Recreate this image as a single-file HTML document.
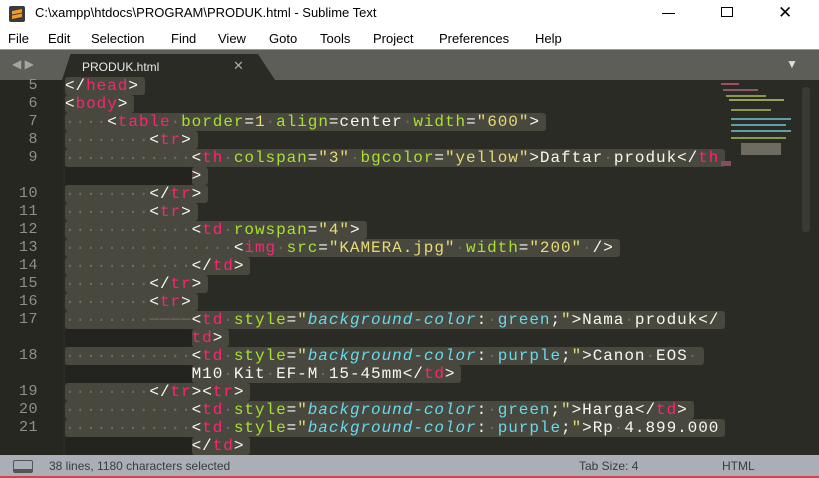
<!DOCTYPE html>
<html><head><meta charset="utf-8"><style>
*{margin:0;padding:0;box-sizing:border-box}
body{width:819px;height:478px;overflow:hidden;background:#2b2b25;font-family:"Liberation Sans",sans-serif;position:relative}
#title{position:absolute;left:0;top:0;width:819px;height:28px;background:#fff}
#title .ic{position:absolute;left:9px;top:6px;width:16px;height:16px;background:#3b3b3b;border-radius:2px}
#title .ic b{position:absolute;left:3px;top:3px;width:10px;height:10px;background:#f29b21;clip-path:polygon(0 20%,100% 0,100% 35%,0 55%,0 100%,100% 80%,100% 45%,0 65%)}
#title .t{position:absolute;left:35px;top:5px;font-size:13px;color:#000}
#menu{position:absolute;left:0;top:28px;width:819px;height:22px;background:#fff;border-bottom:1px solid #9a9a9a}
#menu span{position:absolute;top:3px;font-size:13px;color:#000}
#tabbar{position:absolute;left:0;top:50px;width:819px;height:30px;background:#5e5e59}
#tab{position:absolute;left:62px;top:54px;width:213px;height:26px;background:#2b2b25;clip-path:polygon(4% 0,92% 0,100% 100%,0 100%)}
#editor{position:absolute;left:0;top:80px;width:819px;height:375px;background:#2b2b25}
#gut{position:absolute;left:0;top:80px;width:63px;height:375px;background:#272722}
.row{position:absolute;left:0;height:18px;width:720px;font-family:"Liberation Mono",monospace;font-size:16px;letter-spacing:0.95px;line-height:18px;white-space:pre}
.num{position:absolute;left:0;width:38px;text-align:right;color:#8f908a;font-size:15px;letter-spacing:0.5px}
.code{position:absolute;left:65px;top:0;color:#f8f8f2;height:18px}
.sel{background:#49483e;border-radius:3px;padding-right:6px;display:inline-block;height:18px}
.wr{background:#23231f;border-radius:3px;display:inline-block;height:18px}
.d{color:#6e6d62}.t{color:#f92672}.a{color:#a6e22e}.s{color:#e6db74}.c{color:#66d9ef;font-style:italic}.v{color:#66d9ef}
#status{position:absolute;left:0;top:455px;width:819px;height:23px;background:#a9aeb7;border-bottom:2px solid #d2444a;font-size:12px;color:#3c3c3c}
</style></head><body>
<div id="title"><div class="ic"><b></b></div><div class="t">C:\xampp\htdocs\PROGRAM\PRODUK.html - Sublime Text</div>
<div style="position:absolute;left:662px;top:13px;width:13px;height:1px;background:#000"></div>
<div style="position:absolute;left:721px;top:7px;width:12px;height:10px;border:1px solid #000"></div>
<div style="position:absolute;left:778px;top:3px;font-size:17px;color:#000">✕</div></div>
<div id="menu"><span style="left:8px">File</span><span style="left:48px">Edit</span><span style="left:91px">Selection</span><span style="left:171px">Find</span><span style="left:218px">View</span><span style="left:269px">Goto</span><span style="left:320px">Tools</span><span style="left:373px">Project</span><span style="left:439px">Preferences</span><span style="left:535px">Help</span></div>
<div id="tabbar"><span style="position:absolute;left:12px;top:7px;color:#a5a5a0;font-size:12px">◀ ▶</span>
<span style="position:absolute;left:786px;top:7px;color:#ddd;font-size:12px">▼</span></div>
<div id="tab"><span style="position:absolute;left:20px;top:6px;font-size:12px;color:#e8e8e8">PRODUK.html</span><span style="position:absolute;left:171px;top:4px;font-size:13px;color:#aaa">✕</span></div>
<div id="editor"></div><div id="gut"></div>

<div class="row" style="top:77px"><span class="num">5</span><span class="code sel">&lt;/<span class="t">head</span>&gt;</span></div>
<div class="row" style="top:95px"><span class="num">6</span><span class="code sel">&lt;<span class="t">body</span>&gt;</span></div>
<div class="row" style="top:113px"><span class="num">7</span><span class="code sel"><span class="d">····</span>&lt;<span class="t">table</span><span class="d">·</span><span class="a">border</span>=<span class="s">1</span><span class="d">·</span><span class="a">align</span>=center<span class="d">·</span><span class="a">width</span>=<span class="s">"600"</span>&gt;</span></div>
<div class="row" style="top:131px"><span class="num">8</span><span class="code sel"><span class="d">········</span>&lt;<span class="t">tr</span>&gt;</span></div>
<div class="row" style="top:149px"><span class="num">9</span><span class="code sel"><span class="d">············</span>&lt;<span class="t">th</span><span class="d">·</span><span class="a">colspan</span>=<span class="s">"3"</span><span class="d">·</span><span class="a">bgcolor</span>=<span class="s">"yellow"</span>&gt;Daftar<span class="d">·</span>produk&lt;/<span class="t">th</span></span></div>
<div class="row" style="top:167px"><span class="code"><span class="wr">            </span><span class="sel">&gt;</span></span></div>
<div class="row" style="top:185px"><span class="num">10</span><span class="code sel"><span class="d">········</span>&lt;/<span class="t">tr</span>&gt;</span></div>
<div class="row" style="top:203px"><span class="num">11</span><span class="code sel"><span class="d">········</span>&lt;<span class="t">tr</span>&gt;</span></div>
<div class="row" style="top:221px"><span class="num">12</span><span class="code sel"><span class="d">············</span>&lt;<span class="t">td</span><span class="d">·</span><span class="a">rowspan</span>=<span class="s">"4"</span>&gt;</span></div>
<div class="row" style="top:239px"><span class="num">13</span><span class="code sel"><span class="d">················</span>&lt;<span class="t">img</span><span class="d">·</span><span class="a">src</span>=<span class="s">"KAMERA.jpg"</span><span class="d">·</span><span class="a">width</span>=<span class="s">"200"</span><span class="d">·</span>/&gt;</span></div>
<div class="row" style="top:257px"><span class="num">14</span><span class="code sel"><span class="d">············</span>&lt;/<span class="t">td</span>&gt;</span></div>
<div class="row" style="top:275px"><span class="num">15</span><span class="code sel"><span class="d">········</span>&lt;/<span class="t">tr</span>&gt;</span></div>
<div class="row" style="top:293px"><span class="num">16</span><span class="code sel"><span class="d">········</span>&lt;<span class="t">tr</span>&gt;</span></div>
<div class="row" style="top:311px"><span class="num">17</span><span class="code sel"><span class="d">········────</span>&lt;<span class="t">td</span><span class="d">·</span><span class="a">style</span>=<span class="s">"</span><span class="c">background-color</span>:<span class="d">·</span><span class="v">green</span>;<span class="s">"</span>&gt;Nama<span class="d">·</span>produk&lt;/</span></div>
<div class="row" style="top:329px"><span class="code"><span class="wr">            </span><span class="sel"><span class="t">td</span>&gt;</span></span></div>
<div class="row" style="top:347px"><span class="num">18</span><span class="code sel"><span class="d">············</span>&lt;<span class="t">td</span><span class="d">·</span><span class="a">style</span>=<span class="s">"</span><span class="c">background-color</span>:<span class="d">·</span><span class="v">purple</span>;<span class="s">"</span>&gt;Canon<span class="d">·</span>EOS<span class="d">·</span></span></div>
<div class="row" style="top:365px"><span class="code"><span class="wr">            </span><span class="sel">M10<span class="d">·</span>Kit<span class="d">·</span>EF-M<span class="d">·</span>15-45mm&lt;/<span class="t">td</span>&gt;</span></span></div>
<div class="row" style="top:383px"><span class="num">19</span><span class="code sel"><span class="d">········</span>&lt;/<span class="t">tr</span>&gt;&lt;<span class="t">tr</span>&gt;</span></div>
<div class="row" style="top:401px"><span class="num">20</span><span class="code sel"><span class="d">············</span>&lt;<span class="t">td</span><span class="d">·</span><span class="a">style</span>=<span class="s">"</span><span class="c">background-color</span>:<span class="d">·</span><span class="v">green</span>;<span class="s">"</span>&gt;Harga&lt;/<span class="t">td</span>&gt;</span></div>
<div class="row" style="top:419px"><span class="num">21</span><span class="code sel"><span class="d">············</span>&lt;<span class="t">td</span><span class="d">·</span><span class="a">style</span>=<span class="s">"</span><span class="c">background-color</span>:<span class="d">·</span><span class="v">purple</span>;<span class="s">"</span>&gt;Rp<span class="d">·</span>4.899.000</span></div>
<div class="row" style="top:437px"><span class="code"><span class="wr">            </span><span class="sel">&lt;/<span class="t">td</span>&gt;</span></span></div>

<div style="position:absolute;left:721px;top:83px;width:75px;height:85px">
<div style="position:absolute;left:0;top:0;width:18px;height:2px;background:#a04c6a"></div>
<div style="position:absolute;left:2px;top:6px;width:35px;height:2px;background:#8a5a6a"></div>
<div style="position:absolute;left:5px;top:12px;width:40px;height:2px;background:#8a9a4a"></div>
<div style="position:absolute;left:8px;top:16px;width:55px;height:2px;background:#9aa060"></div>
<div style="position:absolute;left:10px;top:26px;width:40px;height:2px;background:#8a9a4a"></div>
<div style="position:absolute;left:10px;top:35px;width:60px;height:2px;background:#5fa0a8"></div>
<div style="position:absolute;left:10px;top:41px;width:55px;height:2px;background:#5fa0a8"></div>
<div style="position:absolute;left:10px;top:47px;width:60px;height:2px;background:#5fa0a8"></div>
<div style="position:absolute;left:10px;top:54px;width:55px;height:2px;background:#8a9a4a"></div>
<div style="position:absolute;left:20px;top:60px;width:40px;height:12px;background:#6e6b60"></div>
<div style="position:absolute;left:0;top:78px;width:10px;height:5px;background:#8a4a60"></div>
</div>
<div style="position:absolute;left:802px;top:87px;width:8px;height:145px;background:#3a3a35;border-radius:3px"></div>

<div id="status"><div style="position:absolute;left:13px;top:5px;width:20px;height:13px;border:1px solid #555;border-bottom:4px solid #555;border-radius:2px"></div>
<span style="position:absolute;left:49px;top:4px">38 lines, 1180 characters selected</span>
<span style="position:absolute;left:579px;top:4px">Tab Size: 4</span>
<span style="position:absolute;left:722px;top:4px">HTML</span></div>
</body></html>
